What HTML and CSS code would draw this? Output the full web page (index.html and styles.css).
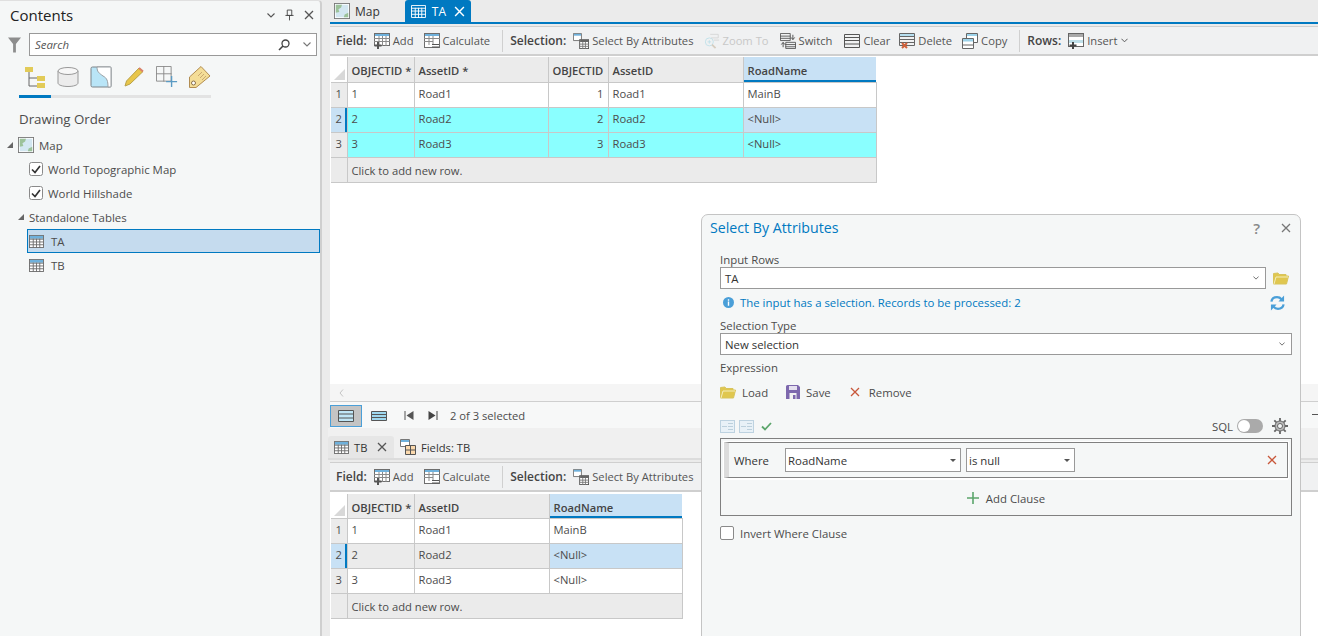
FILE: index.html
```html
<!DOCTYPE html>
<html lang="en">
<head>
    <meta charset="UTF-8">
    <meta name="viewport" content="width=device-width, initial-scale=1.0">
    <title>Select By Attributes</title>
    <link rel="stylesheet" href="styles.css">
</head>
<body>
    <svg class="defs" width="0" height="0">
        <symbol id="i-table" viewBox="0 0 16 14">
            <rect x="0.5" y="0.5" width="15" height="13" fill="#fff" stroke="#6e6e6e"/>
            <rect x="1" y="1" width="14" height="3" fill="#6fb1dc"/>
            <path d="M0 4.5h16M0 7.5h16M0 10.5h16M4.5 4v10M8 4v10M11.5 4v10" stroke="#6e6e6e" fill="none"/>
        </symbol>
        <symbol id="i-table-w" viewBox="0 0 16 14">
            <path d="M.5.500h15v13H.5zM0 3.500h16M0 6.500h16M0 10h16M4.500 3v11M8 3v11M11.500 3v11" stroke="#fff" fill="none"/>
        </symbol>
        <symbol id="i-map" viewBox="0 0 18 18">
            <rect x="0.5" y="0.5" width="17" height="17" fill="#fff" stroke="#777"/>
            <rect x="2" y="2" width="14" height="14" fill="#d3e7f1"/>
            <path d="M2 2h7l-1 3-3 2 1 3-4 1zM11 16l1-3 4-2v5z" fill="#9cc29a"/>
        </symbol>
        <symbol id="i-add" viewBox="0 0 16 16">
            <rect x="0.5" y="0.5" width="15" height="12" fill="#fff" stroke="#6e6e6e"/>
            <rect x="1" y="1" width="14" height="2" fill="#6fb1dc"/>
            <path d="M0 5.500h16M0 8.500h16M5 3v10M8.500 3v10M12 3v10" stroke="#8a8a8a" fill="none"/>
            <path d="M4 9v7M.5 12.500h7" stroke="#555" stroke-width="2" fill="none"/>
        </symbol>
        <symbol id="i-calc" viewBox="0 0 16 16">
            <rect x="0.5" y="0.5" width="15" height="14" fill="#fff" stroke="#6e6e6e"/>
            <rect x="1" y="1" width="14" height="2" fill="#6fb1dc"/>
            <path d="M0 5.500h16M0 8.500h9M5 3v9M9 3v9" stroke="#8a8a8a" fill="none"/>
            <path d="M8 11.500h7M8 14h7" stroke="#555" fill="none"/>
        </symbol>
        <symbol id="i-sba" viewBox="0 0 18 18">
            <path d="M.5.500h9v8h-9z" fill="#fff" stroke="#6e6e6e"/>
            <rect x="1" y="1" width="8" height="2" fill="#6fb1dc"/>
            <rect x="7.500" y="7.500" width="10" height="10" fill="#fff" stroke="#555"/>
            <rect x="8" y="8" width="9" height="2" fill="#555"/>
            <path d="M7 12.500h11M7 15h11M11 10v8M14 10v8" stroke="#777" fill="none"/>
        </symbol>
        <symbol id="i-zoomto" viewBox="0 0 18 18" >
            <circle cx="6" cy="10" r="4.500" fill="none" stroke="#bfe0ea"/>
            <path d="M4 10h4M6 8v4" stroke="#bfe0ea" fill="none"/>
            <path d="M9 13l4 4" stroke="#d6cdbf" stroke-width="2"/>
            <path d="M7 1.500h9v4H8M11 8h6" stroke="#d5d5d5" fill="none"/>
        </symbol>
        <symbol id="i-switch" viewBox="0 0 18 18">
            <path d="M.5.500h11v8H.5zM0 3.500h12M0 6h12M6.500 10.500h11v7h-11zM6 13h12M6 15.500h12" stroke="#555" fill="none"/>
            <path d="M14.500 2v5M12.500 5l2 2.500 2-2.500M3.500 16v-5M1.500 13l2-2.500 2 2.500" stroke="#444" fill="none"/>
        </symbol>
        <symbol id="i-clear" viewBox="0 0 16 14">
            <path d="M.5.500h15v13H.5zM0 3.500h16M0 6.500h16M0 10h16" stroke="#555" fill="none"/>
        </symbol>
        <symbol id="i-delete" viewBox="0 0 16 16">
            <path d="M.5.500h15v12H.5zM0 3.500h16M0 6.500h16M0 9.500h16" stroke="#666" fill="none"/>
            <rect x="1" y="1" width="14" height="2" fill="#b7dff0"/>
            <path d="M3 10l5 5M8 10l-5 5" stroke="#d0603a" stroke-width="2" fill="none"/>
        </symbol>
        <symbol id="i-copy" viewBox="0 0 16 16">
            <path d="M4.500.500h11v9h-11z" fill="#fff" stroke="#666"/>
            <rect x="5" y="1" width="10" height="2" fill="#9dd3ea"/>
            <path d="M.5 5.500h11v10H.5z" fill="#fff" stroke="#666"/>
            <rect x="1" y="6" width="10" height="2.500" fill="#9dd3ea"/>
            <path d="M0 12h12" stroke="#666"/>
        </symbol>
        <symbol id="i-insert" viewBox="0 0 16 16">
            <rect x="0.5" y="0.5" width="15" height="13" fill="#fff" stroke="#666"/>
            <path d="M1 1h14v3H1z" fill="#a9a9a9"/>
            <path d="M1 7h14v3H1z" fill="#bfe0ea"/>
            <path d="M5 9v7M1.500 12.500h7" stroke="#444" stroke-width="2" fill="none"/>
        </symbol>
        <symbol id="i-fields" viewBox="0 0 16 16">
            <path d="M.5.500h9v7h-9z" fill="#fff" stroke="#777"/>
            <rect x="1" y="1" width="8" height="2" fill="#6fb1dc"/>
            <path d="M5.500 6.500h10v9h-10z" fill="#fbd9ad" stroke="#555"/>
            <path d="M5 11h11M10.500 6v10" stroke="#555"/>
        </symbol>
        <symbol id="i-folder" viewBox="0 0 16 14">
            <path d="M0.500 2.500V13h13l2-8H13V3.500H6L5 2z" fill="#e0c74f" stroke="#d8c45c"/>
            <path d="M1 13l2-7h12" fill="none" stroke="#f4eebc"/>
        </symbol>
        <symbol id="i-check" viewBox="0 0 14 14">
            <rect x="0.500" y="0.500" width="13" height="13" rx="2" fill="#fff" stroke="#8a8a8a"/>
            <path d="M3 7.500l3 3 5-6.500" fill="none" stroke="#333" stroke-width="1.700"/>
        </symbol>
        <symbol id="i-x" viewBox="0 0 10 10">
            <path d="M1 1l8 8M9 1l-8 8" fill="none" stroke="currentColor" stroke-width="1.300"/>
        </symbol>
        <symbol id="i-chev" viewBox="0 0 8 5">
            <path d="M.5.500L4 4 7.500.500" fill="none" stroke="currentColor" stroke-width="1.100"/>
        </symbol>
        <symbol id="i-indent" viewBox="0 0 15 13">
            <rect x="0.500" y="0.500" width="14" height="12" fill="#e8f1f7" stroke="#bdd2e0"/>
            <path d="M8 3.500h5M8 6.500h5M8 9.500h5M2 6.500h5" stroke="#bcd0dc" fill="none"/>
        </symbol>
    </svg>

    <div class="app">
        <aside class="contents">
            <div class="pane-head">
                <h2>Contents</h2>
                <div class="pane-tools">
                    <svg class="ico-chev"><use href="#i-chev"/></svg>
                    <svg class="ico-pin" viewBox="0 0 10 12"><path d="M2.500.500h5v6h-5zM.5 6.500h9M5 7v5" fill="none" stroke="#444"/></svg>
                    <svg class="ico-x"><use href="#i-x"/></svg>
                </div>
            </div>
            <div class="search-row">
                <svg class="funnel" viewBox="0 0 14 16"><path d="M0 0h14L8.500 7v9h-3V7z" fill="#8d8d8d"/></svg>
                <div class="search">
                    <span>Search</span>
                    <svg class="ico-glass" viewBox="0 0 12 12"><circle cx="7.500" cy="4.500" r="3.500" fill="none" stroke="#444" stroke-width="1.300"/><path d="M5 7l-4 4" stroke="#444" stroke-width="1.600"/></svg>
                    <svg class="ico-chev grey"><use href="#i-chev"/></svg>
                </div>
            </div>
            <div class="view-icons">
                <svg viewBox="0 0 22 22"><path d="M1 1h8v5H1zM13 10h8v5h-8zM13 17h8v5h-8z" fill="#e2cb58"/><path d="M5 6v14h8M5 12h8" fill="none" stroke="#666"/></svg>
                <svg viewBox="0 0 22 22"><path d="M1 5v12c0 2 4.500 3.500 10 3.500S21 19 21 17V5" fill="#ececec" stroke="#999"/><ellipse cx="11" cy="5" rx="10" ry="3.500" fill="#f7f7f7" stroke="#999"/></svg>
                <svg viewBox="0 0 22 22"><rect x="1" y="1" width="20" height="20" rx="1.500" fill="#b9e5f7" stroke="#7d8388"/><path d="M7 1c0 5 2 6 6 9 4 2 5 5 5 11h3V1z" fill="#fff" stroke="#9a9fa3"/></svg>
                <svg viewBox="0 0 22 22"><path d="M2 20l1.500-5L16 2l4 3.500L7 18z" fill="#e8c64a" stroke="#b9a248"/><path d="M16 2l4 3.500" stroke="#d9816b" stroke-width="2"/></svg>
                <svg viewBox="0 0 24 24"><path d="M.5.500h16v16H.5zM8.500 0v17M0 8.500h17" fill="none" stroke="#888"/><path d="M17 11v12M11 17h12" stroke="#5b9bc4" stroke-width="1.500" fill="none"/></svg>
                <svg viewBox="0 0 22 22"><path d="M.5 11L12 .5l9 9.500L7 21.500H.5z" fill="#f4dd97" stroke="#b28d52"/><circle cx="4.500" cy="17" r="2" fill="#fff" stroke="#8a6f47"/><path d="M9 10l4-4M11 12l4-4M13 14l4-4" stroke="#c9a870"/></svg>
            </div>
            <div class="view-line"><span></span></div>
            <h3>Drawing Order</h3>
            <ul class="tree">
                <li class="lvl-map"><span class="tri"></span><svg class="ico-map"><use href="#i-map"/></svg>Map</li>
                <li class="lvl-layer"><svg class="ico-check"><use href="#i-check"/></svg>World Topographic Map</li>
                <li class="lvl-layer"><svg class="ico-check"><use href="#i-check"/></svg>World Hillshade</li>
                <li class="lvl-group"><span class="tri"></span>Standalone Tables</li>
                <li class="lvl-table active"><svg class="ico-table"><use href="#i-table"/></svg>TA</li>
                <li class="lvl-table"><svg class="ico-table"><use href="#i-table"/></svg>TB</li>
            </ul>
        </aside>

        <main class="views">
            <div class="tabs">
                <div class="tab"><svg class="ico-map"><use href="#i-map"/></svg>Map</div>
                <div class="tab current"><svg class="ico-table"><use href="#i-table-w"/></svg>TA<svg class="ico-x"><use href="#i-x"/></svg></div>
            </div>
            <div class="toolbar">
                <b>Field:</b>
                <span class="btn"><svg><use href="#i-add"/></svg>Add</span>
                <span class="btn"><svg><use href="#i-calc"/></svg>Calculate</span>
                <i class="sep"></i>
                <b>Selection:</b>
                <span class="btn"><svg><use href="#i-sba"/></svg>Select By Attributes</span>
                <span class="btn off"><svg><use href="#i-zoomto"/></svg>Zoom To</span>
                <span class="btn switch"><svg><use href="#i-switch"/></svg>Switch</span>
                <span class="btn clear"><svg><use href="#i-clear"/></svg>Clear</span>
                <span class="btn"><svg><use href="#i-delete"/></svg>Delete</span>
                <span class="btn"><svg><use href="#i-copy"/></svg>Copy</span>
                <i class="sep"></i>
                <b>Rows:</b>
                <span class="btn"><svg><use href="#i-insert"/></svg>Insert<svg class="ico-chev"><use href="#i-chev"/></svg></span>
            </div>
            <div class="grid-wrap top">
                <table class="grid wide">
                    <colgroup><col class="c-head"><col class="c-oid"><col class="c-a1"><col class="c-oid2"><col class="c-a2"><col class="c-road"></colgroup>
                    <tr><th class="corner"><span></span></th><th>OBJECTID *</th><th>AssetID *</th><th>OBJECTID</th><th>AssetID</th><th class="sorted">RoadName</th></tr>
                    <tr><td class="rh">1</td><td>1</td><td>Road1</td><td class="num">1</td><td>Road1</td><td>MainB</td></tr>
                    <tr class="hit"><td class="rh on">2</td><td>2</td><td>Road2</td><td class="num">2</td><td>Road2</td><td class="cur">&lt;Null&gt;</td></tr>
                    <tr class="hit"><td class="rh">3</td><td>3</td><td>Road3</td><td class="num">3</td><td>Road3</td><td>&lt;Null&gt;</td></tr>
                    <tr class="new"><td class="rh"></td><td colspan="5">Click to add new row.</td></tr>
                </table>
            </div>
            <div class="hscroll"><svg class="ico-left" viewBox="0 0 5 8"><path d="M4 .5L1 4l3 3.500" fill="none" stroke="#c4c4c4"/></svg></div>
            <div class="status">
                <span class="view-btn on"><svg viewBox="0 0 16 12"><path d="M.5.500h15v11H.5zM0 4h16M0 8h16" fill="#bfe6f6" stroke="#555"/></svg></span>
                <span class="view-btn"><svg viewBox="0 0 16 10"><path d="M.5.500h15v9H.5zM0 3.500h16M0 6.500h16" fill="#9fd8ef" stroke="#555"/></svg></span>
                <svg class="ico-step first" viewBox="0 0 9 9"><path d="M9 0v9L2 4.500z" fill="#555"/><path d="M.5 0v9" stroke="#555"/></svg>
                <svg class="ico-step" viewBox="0 0 9 9"><path d="M0 0v9l7-4.500z" fill="#444"/><path d="M8.500 0v9" stroke="#444"/></svg>
                <span class="count">2 of 3 selected</span>
                <span class="minus"></span>
            </div>
            <div class="splitter"></div>
            <div class="tabs lower">
                <div class="tab open"><svg class="ico-table"><use href="#i-table"/></svg>TB<svg class="ico-x"><use href="#i-x"/></svg></div>
                <div class="tab"><svg class="ico-fields"><use href="#i-fields"/></svg>Fields: TB</div>
            </div>
            <div class="toolbar">
                <b>Field:</b>
                <span class="btn"><svg><use href="#i-add"/></svg>Add</span>
                <span class="btn"><svg><use href="#i-calc"/></svg>Calculate</span>
                <i class="sep"></i>
                <b>Selection:</b>
                <span class="btn"><svg><use href="#i-sba"/></svg>Select By Attributes</span>
            </div>
            <div class="grid-wrap">
                <table class="grid narrow">
                    <colgroup><col class="c-head"><col class="c-oid"><col class="c-a3"><col class="c-road"></colgroup>
                    <tr><th class="corner"><span></span></th><th>OBJECTID *</th><th>AssetID</th><th class="sorted">RoadName</th></tr>
                    <tr><td class="rh">1</td><td>1</td><td>Road1</td><td>MainB</td></tr>
                    <tr class="sel"><td class="rh on">2</td><td>2</td><td>Road2</td><td class="cur">&lt;Null&gt;</td></tr>
                    <tr><td class="rh">3</td><td>3</td><td>Road3</td><td>&lt;Null&gt;</td></tr>
                    <tr class="new"><td class="rh"></td><td colspan="3">Click to add new row.</td></tr>
                </table>
            </div>
        </main>
    </div>

    <section class="dialog">
        <header class="dlg-head">
            <h2>Select By Attributes</h2>
            <span class="help">?</span>
            <svg class="ico-x"><use href="#i-x"/></svg>
        </header>
        <label class="fld">Input Rows</label>
        <div class="input-row">
            <div class="combo"><span>TA</span><svg class="ico-chev"><use href="#i-chev"/></svg></div>
            <svg class="ico-folder"><use href="#i-folder"/></svg>
        </div>
        <div class="info">
            <svg class="ico-info" viewBox="0 0 12 12"><circle cx="6" cy="6" r="6" fill="#4a9fd8"/><path d="M6 5v4.500M6 2.500v1.500" stroke="#fff" stroke-width="1.500"/></svg>
            <span>The input has a selection. Records to be processed: 2</span>
            <svg class="ico-refresh" viewBox="0 0 16 16"><path d="M1.500 6.500C2 3.500 4.500 1.800 7.500 1.800c2 0 3.500.7 4.700 2.200M14.500 9.500c-.5 3-3 4.700-6 4.700-2 0-3.500-.7-4.700-2.200" fill="none" stroke="#4a9fd8" stroke-width="2.400"/><path d="M15 0v6.500H9zM1 16V9.500h6z" fill="#4a9fd8"/></svg>
        </div>
        <label class="fld type">Selection Type</label>
        <div class="combo full"><span>New selection</span><svg class="ico-chev"><use href="#i-chev"/></svg></div>
        <div class="fld expr">Expression</div>
        <div class="actions">
            <span><svg class="ico-folder"><use href="#i-folder"/></svg>Load</span>
            <span><svg class="ico-save" viewBox="0 0 14 14"><path d="M0 1.500A1.500 1.500 0 011.500 0H12l2 2v12H0z" fill="#7d68ad"/><rect x="3" y="1" width="8" height="4" fill="#e5e0ef"/><rect x="3.500" y="8" width="7" height="6" fill="#f2f2f2"/><rect x="7" y="10" width="2.500" height="4" fill="#7d68ad"/></svg>Save</span>
            <span class="remove"><svg class="ico-x red"><use href="#i-x"/></svg>Remove</span>
        </div>
        <div class="expr-tools">
            <svg class="ico-indent"><use href="#i-indent"/></svg>
            <svg class="ico-indent"><use href="#i-indent"/></svg>
            <svg class="ico-valid" viewBox="0 0 11 9"><path d="M1 4.500l3 3L10 1" fill="none" stroke="#5ba56b" stroke-width="1.800"/></svg>
            <span class="sql">SQL</span>
            <span class="toggle"><i></i></span>
            <svg class="ico-gear" viewBox="0 0 16 16"><circle cx="8" cy="8" r="5" fill="#bbb" stroke="#666"/><circle cx="8" cy="8" r="2.500" fill="#f5f7f7" stroke="#666"/><path d="M8 0v3M8 13v3M0 8h3M13 8h3M2.300 2.300l2.100 2.100M11.600 11.600l2.100 2.100M13.700 2.300l-2.100 2.100M4.400 11.600l-2.100 2.100" stroke="#666" stroke-width="1.800"/></svg>
        </div>
        <div class="clause-box">
            <div class="clause">
                <span class="where">Where</span>
                <div class="pick road"><span>RoadName</span><i></i></div>
                <div class="pick op"><span>is null</span><i></i></div>
                <svg class="ico-x red"><use href="#i-x"/></svg>
            </div>
            <div class="add-clause"><svg class="ico-plus" viewBox="0 0 12 12"><path d="M6 0v12M0 6h12" stroke="#5ba56b" stroke-width="1.600"/></svg>Add Clause</div>
        </div>
        <div class="invert"><span class="box"></span>Invert Where Clause</div>
    </section>
</body>
</html>
```

FILE: styles.css
```css
* {
    margin: 0;
    padding: 0;
    box-sizing: border-box;
}

html, body {
    height: 636px;
    overflow: hidden;
}

body {
    font-family: "Open Sans", Arial, sans-serif;
    font-size: 11.4px;
    color: #4c4c4c;
    background-color: #ebebeb;
    position: relative;
}

.defs {
    position: absolute;
}

svg {
    display: block;
    flex: none;
}

.app {
    display: flex;
    height: 636px;
}

/* left pane */
.contents {
    width: 322px;
    height: 636px;
    background-color: #f5f7f7;
    border-top: 1px solid #e0e0e0;
    border-right: 2px solid #cfcfcf;
    border-top-right-radius: 4px;
    flex: none;
}

.pane-head {
    display: flex;
    align-items: center;
    justify-content: space-between;
    height: 28px;
    padding: 0 6px 0 10px;
}

.pane-head h2 {
    font-size: 15px;
    font-weight: 400;
    color: #222;
}

.pane-tools {
    display: flex;
    align-items: center;
    gap: 10px;
}

.ico-chev {
    width: 8px;
    height: 5px;
    color: #555;
}

.ico-chev.grey {
    color: #777;
}

.ico-pin {
    width: 9px;
    height: 12px;
}

.ico-x {
    width: 10px;
    height: 10px;
    color: #555;
}

.search-row {
    display: flex;
    align-items: center;
    gap: 8px;
    padding: 4px 3px 0 8px;
}

.funnel {
    width: 13px;
    height: 16px;
}

.search {
    flex: 1;
    height: 23px;
    display: flex;
    align-items: center;
    background-color: #fff;
    border: 1px solid #999;
    padding: 0 5px;
    font-style: italic;
    color: #555;
}

.search span {
    flex: 1;
}

.ico-glass {
    width: 12px;
    height: 12px;
    margin-right: 13px;
}

.view-icons {
    display: flex;
    gap: 11px;
    padding: 10px 0 0 24px;
    align-items: center;
}

.view-icons svg {
    width: 22px;
    height: 22px;
}

.view-line {
    height: 3px;
    width: 192px;
    margin: 7px 0 0 19px;
    background-color: #e3e3e3;
}

.view-line span {
    display: block;
    width: 32px;
    height: 3px;
    background-color: #0079c1;
}

.contents h3 {
    font-size: 13.3px;
    font-weight: 500;
    color: #4c4c4c;
    line-height: 18px;
    padding: 12px 0 0 19px;
}

.tree {
    list-style: none;
    margin-top: 5px;
    font-size: 11.45px;
}

.tree li {
    display: flex;
    align-items: center;
    height: 24px;
}

.tri {
    width: 0;
    height: 0;
    border-left: 6px solid transparent;
    border-bottom: 6px solid #666;
}

.lvl-map {
    padding-left: 7px;
    gap: 5px;
}

.ico-map {
    width: 16px;
    height: 16px;
}

.lvl-layer {
    padding-left: 29px;
    gap: 5px;
}

.ico-check {
    width: 14px;
    height: 14px;
}

.lvl-group {
    padding-left: 18px;
    gap: 5px;
}

.lvl-table {
    gap: 7px;
    border: 1px solid transparent;
    margin-left: 27px;
    padding-left: 1px;
}

.tree .active {
    background-color: #c5dbee;
    border-color: #0079c1;
}

.ico-table {
    width: 15px;
    height: 13px;
}

/* right side views */
.views {
    flex: 1;
    min-width: 0;
    display: flex;
    flex-direction: column;
    margin-left: 6px;
}

.tabs {
    display: flex;
    height: 24px;
    border-bottom: 2px solid #0079c1;
    margin-left: 2px;
    padding-left: 4px;
}

.tab {
    display: flex;
    align-items: center;
    gap: 5px;
    height: 22px;
    padding: 0 25px 0 0;
    font-size: 12px;
    color: #333;
}

.tabs .current {
    background-color: #0079c1;
    color: #fff;
    width: 66px;
    padding: 0 6px;
    border-radius: 3px 3px 0 0;
    gap: 6px;
}

.tabs .current .ico-x {
    color: #fff;
    width: 11px;
    height: 11px;
    margin-left: 2px;
}

.lower {
    height: 24px;
    border-bottom: 2px solid #dcdcdc;
    padding-left: 0;
    margin-left: 0;
    background-color: #f0f0f0;
}

.lower .tab {
    font-size: 11.2px;
}

.lower .open {
    background-color: #e6e6e6;
    border-radius: 3px 3px 0 0;
    padding: 0 6px;
    width: 66px;
    margin-right: 6px;
}

.lower .open .ico-x {
    margin-left: 5px;
}

.toolbar {
    display: flex;
    align-items: center;
    height: 30px;
    margin: 2px 0 0 2px;
    padding-left: 6px;
    background-color: #f0f1f2;
    border-top: 1px solid #cfcfcf;
    border-bottom: 2px solid #cfcfcf;
    font-size: 11.2px;
    white-space: nowrap;
}

.toolbar b {
    font-size: 12px;
    font-weight: 600;
    color: #444;
    margin-right: 7px;
}

.btn {
    display: flex;
    align-items: center;
    gap: 3px;
    margin-right: 10px;
    color: #555;
}

.btn svg {
    width: 16px;
    height: 16px;
}

.btn .ico-chev {
    width: 7px;
    height: 5px;
    margin-left: 1px;
}

.btn.off {
    color: #c8c8c8;
    margin-right: 11px;
}

.btn.switch {
    margin-right: 12px;
}

.btn.clear {
    margin-right: 9px;
}

.sep {
    width: 1px;
    height: 22px;
    background-color: #d0d0d0;
    margin: 0 7px 0 2px;
}

.grid-wrap {
    background-color: #fff;
    margin-left: 2px;
    padding: 2px 0 0 1px;
    flex: 1;
}

.grid-wrap.top {
    flex: none;
    height: 328px;
    padding-top: 1px;
}

.grid {
    border-collapse: collapse;
    table-layout: fixed;
    font-size: 11.2px;
}

.grid.wide {
    width: 545px;
}

.grid.narrow {
    width: 351px;
}

.c-head { width: 16px; }
.c-oid { width: 67px; }
.c-a1 { width: 134px; }
.c-oid2 { width: 60px; }
.c-a2 { width: 135px; }
.c-road { width: 133px; }
.c-a3 { width: 135px; }

.grid th, .grid td {
    height: 25px;
    padding: 0 4px 3px;
    border: 1px solid #c8c8c8;
    text-align: left;
    white-space: nowrap;
    overflow: hidden;
}

.grid th {
    padding: 3px 4px 0;
    background-color: #ebebeb;
    font-weight: 600;
    color: #444;
    border-top: none;
}

.grid.narrow th {
    height: 24px;
}

.grid th.sorted {
    background-color: #c8e1f5;
    box-shadow: inset 0 -2px 0 #0079c1;
    border-right: none;
}

.grid th.corner {
    background-color: #fff;
    border-left: none;
    padding: 0;
    position: relative;
}

.corner span {
    position: absolute;
    right: 2px;
    bottom: 2px;
    width: 0;
    height: 0;
    border-left: 11px solid transparent;
    border-bottom: 11px solid #d8d8d8;
}

.grid .rh {
    background-color: #ebebeb;
    text-align: center;
    padding: 0 0 3px;
    border-left: none;
}

.grid .rh.on {
    background-color: #c8e1f5;
    box-shadow: inset -2px 0 0 #0079c1;
}

.grid .num {
    text-align: right;
}

.hit td {
    background-color: #8affff;
}

.sel td {
    background-color: #ebebeb;
}

.grid .cur {
    background-color: #c8e1f5;
}

.grid .new td {
    background-color: #ebebeb;
    padding-top: 1px;
    padding-bottom: 0;
}

.hscroll {
    height: 18px;
    margin-left: 2px;
    background-color: #f5f5f5;
    border-bottom: 1px solid #cfcfcf;
    padding: 5px 0 0 9px;
}

.ico-left {
    width: 5px;
    height: 8px;
}

.status {
    display: flex;
    align-items: center;
    height: 26px;
    margin-left: 2px;
    padding-top: 1px;
    background-color: #f7f8f8;
    font-size: 11.2px;
    position: relative;
}

.view-btn {
    width: 32px;
    height: 22px;
    display: flex;
    align-items: center;
    justify-content: center;
    margin-right: 1px;
}

.view-btn.on {
    background-color: #c4c4c4;
    border: 1px solid #4a9fd8;
}

.view-btn svg {
    width: 16px;
    height: 12px;
}

.ico-step {
    width: 10px;
    height: 9px;
    margin-right: 14px;
}

.ico-step.first {
    margin-left: 8px;
}

.count {
    margin-left: -2px;
}

.minus {
    position: absolute;
    right: 0;
    top: 12px;
    width: 6px;
    height: 1px;
    background-color: #555;
}

.splitter {
    height: 8px;
    background-color: #f0f0f0;
}

.ico-fields {
    width: 16px;
    height: 16px;
}

/* dialog */
.dialog {
    position: absolute;
    left: 701px;
    top: 214px;
    width: 600px;
    height: 423px;
    background-color: #f5f7f7;
    border: 1px solid #c4c4c4;
    border-radius: 7px 7px 0 0;
    padding: 0 8px 0 18px;
}

.dlg-head {
    display: flex;
    align-items: center;
    height: 25px;
    margin: 0 1px 0 -10px;
}

.dlg-head h2 {
    flex: 1;
    font-size: 14.2px;
    font-weight: 400;
    color: #0079c1;
}

.help {
    font-size: 15px;
    font-weight: 600;
    color: #888;
    margin-right: 21px;
}

.dlg-head .ico-x {
    color: #777;
}

.fld {
    display: block;
    height: 16px;
    line-height: 16px;
    margin-top: 11px;
    padding-top: 1px;
    box-sizing: content-box;
    margin-bottom: -1px;
    color: #4c4c4c;
}

.input-row {
    display: flex;
    align-items: center;
    gap: 7px;
}

.combo {
    display: flex;
    align-items: center;
    justify-content: space-between;
    height: 22px;
    width: 546px;
    background-color: #fff;
    border: 1px solid #999;
    padding: 0 6px 0 4px;
    color: #333;
}

.combo .ico-chev {
    width: 6px;
    height: 4px;
}

.combo.full {
    width: 572px;
}

.ico-folder {
    width: 16px;
    height: 14px;
}

.info {
    display: flex;
    align-items: center;
    height: 26px;
    color: #0079c1;
    padding-left: 3px;
}

.info span {
    flex: 1;
    margin-left: 6px;
}

.ico-info {
    width: 11px;
    height: 11px;
}

.ico-refresh {
    width: 15px;
    height: 16px;
    margin: 2px 7px 0 0;
}

.fld.type {
    margin-top: 2px;
}

.fld.expr {
    margin-top: 5px;
    padding-top: 0;
    margin-bottom: 0;
}

.actions {
    display: flex;
    align-items: center;
    gap: 18px;
    height: 20px;
    margin-top: 6px;
}

.actions span {
    display: flex;
    align-items: center;
    gap: 6px;
}

.actions .remove {
    gap: 9px;
    margin-left: 1px;
}

.ico-save {
    width: 14px;
    height: 14px;
}

.ico-x.red {
    color: #c8573a;
}

.expr-tools {
    display: flex;
    align-items: center;
    gap: 4px;
    height: 16px;
    margin-top: 16px;
}

.ico-indent {
    width: 15px;
    height: 13px;
}

.ico-valid {
    width: 11px;
    height: 9px;
    margin-left: 3px;
    flex: none;
}

.sql {
    margin-left: auto;
}

.toggle {
    position: relative;
    width: 26px;
    height: 14px;
    border-radius: 7px;
    background-color: #aaa;
    margin-right: 5px;
}

.toggle i {
    position: absolute;
    left: 1px;
    top: 1px;
    width: 12px;
    height: 12px;
    border-radius: 50%;
    background-color: #fff;
}

.ico-gear {
    width: 16px;
    height: 16px;
    margin-right: 4px;
}

.clause-box {
    margin-top: 4px;
    height: 78px;
    border: 1px solid #808080;
    padding: 3px 3px 0;
}

.clause {
    display: flex;
    align-items: center;
    height: 36px;
    border: 1px solid #808080;
    border-left: 5px solid #dcdcdc;
    padding-left: 5px;
    color: #333;
    outline: 1px solid #fff;
    box-shadow: 0 2px 0 #fff;
}

.where {
    width: 51px;
}

.pick {
    display: flex;
    align-items: center;
    justify-content: space-between;
    height: 24px;
    background-color: #fff;
    border: 1px solid #999;
    padding: 0 4px 0 2px;
}

.pick i {
    width: 0;
    height: 0;
    border: 3px solid transparent;
    border-top: 3px solid #555;
    margin-top: 3px;
}

.pick.road {
    width: 176px;
    margin-right: 5px;
}

.pick.op {
    width: 109px;
}

.clause .ico-x {
    margin-left: auto;
    margin-right: 10px;
}

.add-clause {
    display: flex;
    align-items: center;
    justify-content: center;
    gap: 7px;
    height: 37px;
    padding-top: 3px;
    color: #4c4c4c;
}

.ico-plus {
    width: 12px;
    height: 12px;
}

.invert {
    display: flex;
    align-items: center;
    gap: 6px;
    margin-top: 9px;
    height: 16px;
}

.box {
    width: 14px;
    height: 14px;
    background-color: #fff;
    border: 1px solid #8a8a8a;
    border-radius: 2px;
}
```
